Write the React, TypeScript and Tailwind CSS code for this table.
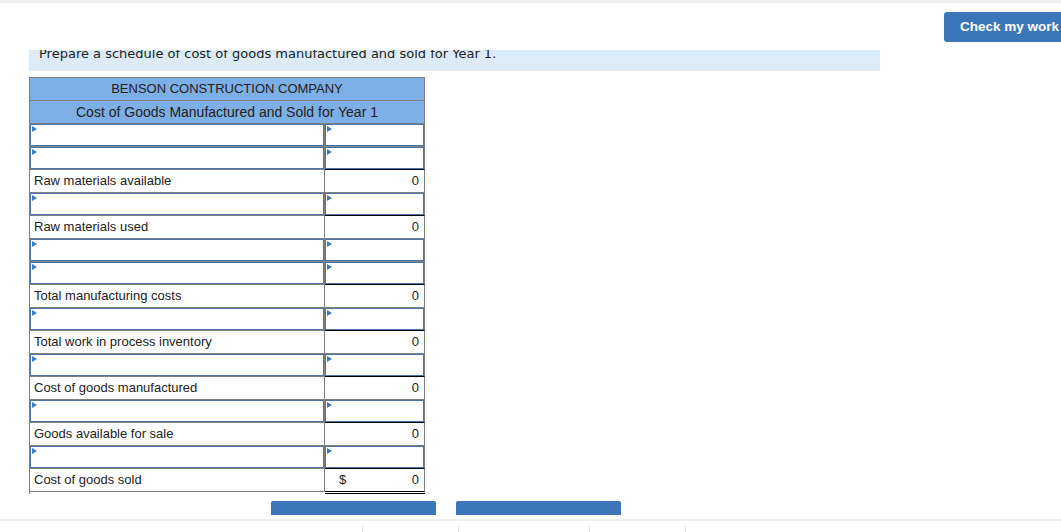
import React from "react";

type Row =
  | { kind: "input" }
  | { kind: "value"; label: string; dollar?: boolean; last?: boolean };

const rows: Row[] = [
  { kind: "input" },
  { kind: "input" },
  { kind: "value", label: "Raw materials available" },
  { kind: "input" },
  { kind: "value", label: "Raw materials used" },
  { kind: "input" },
  { kind: "input" },
  { kind: "value", label: "Total manufacturing costs" },
  { kind: "input" },
  { kind: "value", label: "Total work in process inventory" },
  { kind: "input" },
  { kind: "value", label: "Cost of goods manufactured" },
  { kind: "input" },
  { kind: "value", label: "Goods available for sale" },
  { kind: "input" },
  { kind: "value", label: "Cost of goods sold", dollar: true, last: true },
];

const InputBox = () => (
  <div className="relative h-full w-full border border-[#4b75aa] bg-white">
    <span className="absolute left-[1px] top-[1px] h-0 w-0 border-y-[3px] border-l-[5px] border-y-transparent border-l-[#3b7ac4]" />
  </div>
);

const App = () => {
  return (
    <div
      className="h-[532px] w-[1061px] overflow-hidden bg-white text-[#222]"
      style={{ fontFamily: '"Liberation Sans", Arial, sans-serif' }}
    >
      {/* header */}
      <div className="h-[50px] overflow-hidden">
        <div className="h-[3px] bg-[#f3f3f3] border-b border-[#ebebeb]" />
        <div className="flex pl-[944px] pt-[9px]">
          <button className="h-[30px] w-[130px] shrink-0 rounded-[3px] bg-[#3a76b9] pl-[16px] text-left text-[13.5px] font-bold text-white">
            Check my work
          </button>
        </div>
      </div>

      {/* scrolled content */}
      <div className="h-[465px] overflow-hidden pl-[29px]">
        <div className="h-[21px] w-[851px] overflow-hidden bg-[#dbebf8]">
          <div
            className="-mt-[4px] pl-[10px] text-[13px] leading-[16px] text-[#222]"
            style={{ fontFamily: '"DejaVu Sans", Verdana, sans-serif' }}
          >
            Prepare a schedule of cost of goods manufactured and sold for Year 1.
          </div>
        </div>

        <div className="mt-[6px] w-[396px] border-l border-[#808080] text-[13px]">
          <div className="h-[23px] border-t border-r border-[#808080] bg-[#7bafe5] text-center leading-[22px]">
            BENSON CONSTRUCTION COMPANY
          </div>
          <div className="h-[23px] border-t border-r border-[#808080] bg-[#7bafe5] text-center text-[14px] leading-[22px]">
            Cost of Goods Manufactured and Sold for Year 1
          </div>
          {rows.map((r, i) =>
            r.kind === "input" ? (
              <div key={i} className="flex h-[23px]">
                <div className="h-[23px] w-[295px] border-t border-r border-[#808080]">
                  <InputBox />
                </div>
                <div className="h-[23px] w-[100px] border-t border-r border-[#808080]">
                  <InputBox />
                </div>
              </div>
            ) : (
              <div key={i} className="flex items-start">
                <div
                  className={`w-[295px] shrink-0 border-t border-r border-[#808080] pl-[4px] leading-[22px] ${
                    r.last ? "h-[24px] border-b" : "h-[23px]"
                  }`}
                >
                  {r.label}
                </div>
                <div
                  className={`flex w-[100px] shrink-0 justify-between border-r border-r-[#808080] border-t border-t-black pl-[14px] pr-[5px] leading-[22px] ${
                    r.last ? "h-[26px] border-b-[3px] border-double border-b-black" : "h-[23px]"
                  }`}
                >
                  <span>{r.dollar ? "$" : ""}</span>
                  <span>0</span>
                </div>
              </div>
            )
          )}
        </div>

        <div className="ml-[242px] mt-[7px] flex gap-[20px]">
          <button className="h-[36px] w-[165px] rounded-[2px] bg-[#3a76b9] pt-[4px] text-[14px] font-bold text-white">
            &lt; Prev &nbsp; 16 of 16
          </button>
          <button className="h-[36px] w-[165px] rounded-[2px] bg-[#3a76b9] pt-[4px] text-[14px] font-bold text-white">
            Next &gt;
          </button>
        </div>
      </div>

      {/* footer */}
      <div className="h-[17px] bg-white pt-[4px]">
        <div className="border-t-2 border-[#efefef]" />
        <div className="mt-[4px] flex h-[10px]">
          <div className="w-[363px] border-r border-[#e6e6e6]" />
          <div className="w-[96px] border-r border-[#e6e6e6]" />
          <div className="w-[131px] border-r border-[#e6e6e6]" />
          <div className="w-[96px] border-r border-[#e6e6e6]" />
        </div>
      </div>
    </div>
  );
};

export default App;
